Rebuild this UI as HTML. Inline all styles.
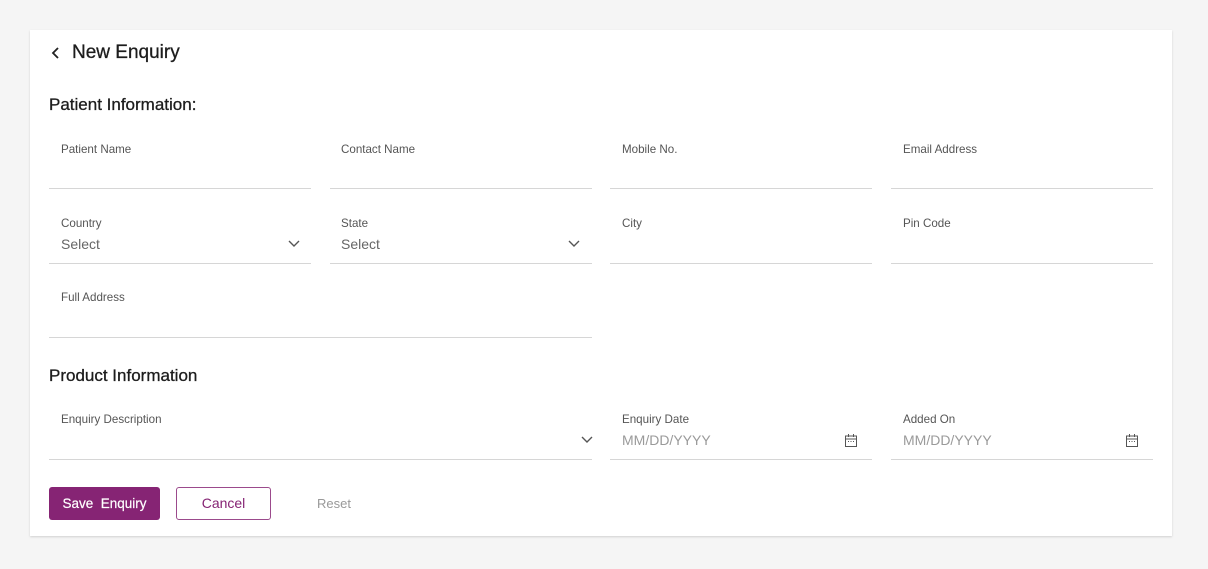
<!DOCTYPE html>
<html><head><style>
body{margin:0;width:1208px;height:569px;background:#f5f5f5;font-family:"Liberation Sans",Arial,sans-serif;position:relative;overflow:hidden}
.card{position:absolute;left:30px;top:30px;width:1142px;height:506px;background:#fff;box-shadow:0 1px 2px rgba(0,0,0,.15)}
.a{position:absolute}
.lbl{font-size:11.6px;color:#555}
.line{height:1px;background:#d6d6d6}
.val{font-size:14px;color:#666}
.ph{font-size:14px;color:#9a9a9a}
.h{font-size:17px;color:#1d1d1d;-webkit-text-stroke:0.3px #1d1d1d}
</style></head><body>
<div class="card"></div>
<svg class="a" style="left:50px;top:46px" width="12" height="14" viewBox="0 0 12 14"><path d="M8 2 L3 7 L8 12" fill="none" stroke="#222" stroke-width="1.8"/></svg>
<div class="a h" style="left:72px;top:42px;font-size:19px">New Enquiry</div>
<div class="a h" style="left:49px;top:95px">Patient Information:</div>
<div class="a h" style="left:49px;top:366px">Product Information</div>

<div class="a lbl" style="left:61px;top:143px">Patient Name</div>
<div class="a lbl" style="left:341px;top:143px">Contact Name</div>
<div class="a lbl" style="left:622px;top:143px">Mobile No.</div>
<div class="a lbl" style="left:903px;top:143px">Email Address</div>
<div class="a line" style="left:49px;top:188px;width:262px"></div>
<div class="a line" style="left:330px;top:188px;width:262px"></div>
<div class="a line" style="left:610px;top:188px;width:262px"></div>
<div class="a line" style="left:891px;top:188px;width:262px"></div>

<div class="a lbl" style="left:61px;top:217px">Country</div>
<div class="a lbl" style="left:341px;top:217px">State</div>
<div class="a lbl" style="left:622px;top:217px">City</div>
<div class="a lbl" style="left:903px;top:217px">Pin Code</div>
<div class="a val" style="left:61px;top:236px">Select</div>
<div class="a val" style="left:341px;top:236px">Select</div>
<svg class="a" style="left:287px;top:239px" width="14" height="10"><path d="M2 2 L7 7 L12 2" fill="none" stroke="#555" stroke-width="1.4"/></svg>
<svg class="a" style="left:567px;top:239px" width="14" height="10"><path d="M2 2 L7 7 L12 2" fill="none" stroke="#555" stroke-width="1.4"/></svg>
<div class="a line" style="left:49px;top:263px;width:262px"></div>
<div class="a line" style="left:330px;top:263px;width:262px"></div>
<div class="a line" style="left:610px;top:263px;width:262px"></div>
<div class="a line" style="left:891px;top:263px;width:262px"></div>

<div class="a lbl" style="left:61px;top:291px">Full Address</div>
<div class="a line" style="left:49px;top:337px;width:543px"></div>

<div class="a lbl" style="left:61px;top:413px">Enquiry Description</div>
<svg class="a" style="left:580px;top:435px" width="14" height="10"><path d="M2 2 L7 7 L12 2" fill="none" stroke="#555" stroke-width="1.4"/></svg>
<div class="a line" style="left:49px;top:459px;width:543px"></div>
<div class="a lbl" style="left:622px;top:413px">Enquiry Date</div>
<div class="a lbl" style="left:903px;top:413px">Added On</div>
<div class="a ph" style="left:622px;top:432px">MM/DD/YYYY</div>
<div class="a ph" style="left:903px;top:432px">MM/DD/YYYY</div>
<svg class="a" style="left:844px;top:433px" width="14" height="15" viewBox="0 0 14 15"><rect x="1.5" y="3" width="11" height="10.5" fill="none" stroke="#555" stroke-width="1"/><path d="M1.5 6 H12.5 M4.5 1 V4 M9.5 1 V4 M4 8.5h1 M6.5 8.5h1 M9 8.5h1" stroke="#555" stroke-width="1"/></svg>
<svg class="a" style="left:1125px;top:433px" width="14" height="15" viewBox="0 0 14 15"><rect x="1.5" y="3" width="11" height="10.5" fill="none" stroke="#555" stroke-width="1"/><path d="M1.5 6 H12.5 M4.5 1 V4 M9.5 1 V4 M4 8.5h1 M6.5 8.5h1 M9 8.5h1" stroke="#555" stroke-width="1"/></svg>
<div class="a line" style="left:610px;top:459px;width:262px"></div>
<div class="a line" style="left:891px;top:459px;width:262px"></div>

<div class="a" style="left:49px;top:487px;width:111px;height:33px;background:#862474;border-radius:3px;color:#fff;font-size:13.5px;line-height:33px;text-align:center;-webkit-text-stroke:0.2px #fff">Save&nbsp; Enquiry</div>
<div class="a" style="left:176px;top:487px;width:93px;height:31px;border:1px solid #9b4a8c;border-radius:3px;color:#862474;font-size:14px;line-height:31px;text-align:center">Cancel</div>
<div class="a" style="left:317px;top:496px;font-size:13px;color:#999">Reset</div>
</body></html>
